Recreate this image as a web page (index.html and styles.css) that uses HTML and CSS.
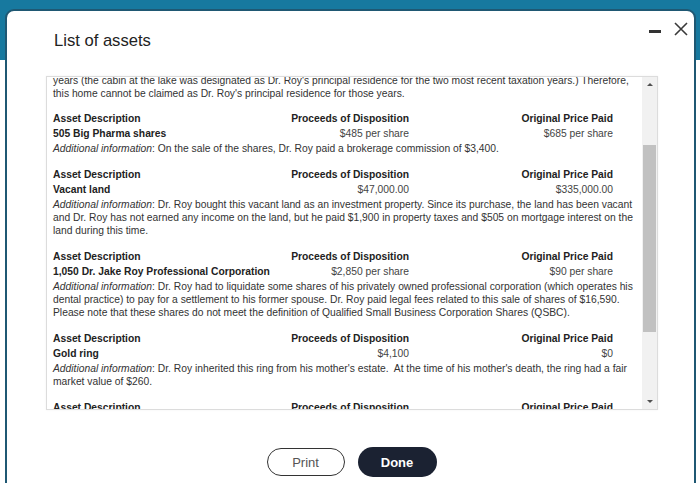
FILE: index.html
```html
<!DOCTYPE html>
<html lang="en">
<head>
<meta charset="utf-8">
<title>List of assets</title>
<link rel="stylesheet" href="styles.css">
</head>
<body>
<div class="backdrop"></div>
<div class="dialog">
  <div class="dialog-header">
    <h1 class="title">List of assets</h1>
    <div class="controls">
      <span class="minimize"></span>
      <svg class="close" width="14" height="14" viewBox="0 0 14 14"><path d="M1 1L13 13M13 1L1 13" stroke="#3a3a3a" stroke-width="1.6" fill="none"/></svg>
    </div>
  </div>
  <div class="scroll-box">
    <div class="scroll-content">
      <p class="intro">years (the cabin at the lake was designated as Dr. Roy's principal residence for the two most recent taxation years.) Therefore, this home cannot be claimed as Dr. Roy's principal residence for those years.</p>

      <div class="asset">
        <div class="row head"><span>Asset Description</span><span class="r">Proceeds of Disposition</span><span class="r">Original Price Paid</span></div>
        <div class="row vals"><span class="name">505 Big Pharma shares</span><span class="r">$485 per share</span><span class="r">$685 per share</span></div>
        <p class="info"><em>Additional information</em>: On the sale of the shares, Dr. Roy paid a brokerage commission of $3,400.</p>
      </div>

      <div class="asset">
        <div class="row head"><span>Asset Description</span><span class="r">Proceeds of Disposition</span><span class="r">Original Price Paid</span></div>
        <div class="row vals"><span class="name">Vacant land</span><span class="r">$47,000.00</span><span class="r">$335,000.00</span></div>
        <p class="info"><em>Additional information</em>: Dr. Roy bought this vacant land as an investment property. Since its purchase, the land has been vacant and Dr. Roy has not earned any income on the land, but he paid $1,900 in property taxes and $505 on mortgage interest on the land during this time.</p>
      </div>

      <div class="asset">
        <div class="row head"><span>Asset Description</span><span class="r">Proceeds of Disposition</span><span class="r">Original Price Paid</span></div>
        <div class="row vals"><span class="name">1,050 Dr. Jake Roy Professional Corporation</span><span class="r">$2,850 per share</span><span class="r">$90 per share</span></div>
        <p class="info"><em>Additional information</em>: Dr. Roy had to liquidate some shares of his privately owned professional corporation (which operates his dental practice) to pay for a settlement to his former spouse. Dr. Roy paid legal fees related to this sale of shares of $16,590. Please note that these shares do not meet the definition of Qualified Small Business Corporation Shares (QSBC).</p>
      </div>

      <div class="asset">
        <div class="row head"><span>Asset Description</span><span class="r">Proceeds of Disposition</span><span class="r">Original Price Paid</span></div>
        <div class="row vals"><span class="name">Gold ring</span><span class="r">$4,100</span><span class="r">$0</span></div>
        <p class="info"><em>Additional information</em>: Dr. Roy inherited this ring from his mother's estate.&nbsp; At the time of his mother's death, the ring had a fair market value of $260.</p>
      </div>

      <div class="asset">
        <div class="row head"><span>Asset Description</span><span class="r">Proceeds of Disposition</span><span class="r">Original Price Paid</span></div>
      </div>
    </div>
    <div class="scrollbar">
      <span class="arrow up"></span>
      <div class="track"><div class="thumb"></div></div>
      <span class="arrow down"></span>
    </div>
  </div>
  <div class="footer">
    <button class="btn btn-print">Print</button>
    <button class="btn btn-done">Done</button>
  </div>
</div>
</body>
</html>
```

FILE: styles.css
```css
html, body {
  margin: 0;
  padding: 0;
  height: 100%;
  overflow: hidden;
}
body {
  background: #ffffff;
  font-family: "Liberation Sans", Arial, sans-serif;
  position: relative;
}
.backdrop {
  position: absolute;
  left: 0;
  top: 0;
  right: 0;
  height: 60px;
  background: #17799f;
}
.dialog {
  position: relative;
  margin: 9px 4px 0 5px;
  height: 500px;
  background: #ffffff;
  border: 2px solid #1f5873;
  border-radius: 9px 9px 0 0;
  display: flex;
  flex-direction: column;
}
.dialog-header {
  display: flex;
  justify-content: space-between;
  align-items: flex-start;
  padding: 11px 6px 0 47px;
}
.title {
  margin: 9px 0 0 0;
  font-size: 16.6px;
  line-height: 20px;
  font-weight: normal;
  color: #222;
}
.controls {
  display: flex;
  align-items: center;
  gap: 13px;
  height: 14px;
}
.minimize {
  display: block;
  width: 12px;
  height: 3px;
  background: #333;
  margin-top: 5px;
}
.close {
  display: block;
}
.scroll-box {
  margin: 25px 36px 0 39px;
  height: 332px;
  border: 1px solid #dcdcdc;
  display: flex;
  overflow: hidden;
  box-shadow: 0 0 2px rgba(0,0,0,0.06);
}
.scroll-content {
  flex: 1;
  overflow: hidden;
  padding: 0 8px 0 6px;
  font-size: 10.3px;
  color: #333;
}
.intro {
  margin: -2px 0 11px 0;
  line-height: 12.5px;
}
.asset {
  margin-bottom: 12px;
}
.row {
  display: grid;
  grid-template-columns: 217px 139px 204px;
}
.row .r {
  text-align: right;
}
.head {
  line-height: 15px;
  font-weight: bold;
  color: #222;
}
.vals {
  line-height: 16px;
  color: #444;
}
.vals .name {
  font-weight: bold;
  color: #222;
  white-space: nowrap;
}
.info {
  margin: 0;
  line-height: 13px;
}
.info em {
  font-style: italic;
}
.scrollbar {
  width: 15px;
  background: #f1f1f1;
  display: flex;
  flex-direction: column;
  align-items: center;
}
.arrow {
  display: block;
  width: 0;
  height: 0;
  border-left: 3px solid transparent;
  border-right: 3px solid transparent;
}
.arrow.up {
  margin: 6px 0 4px;
  border-bottom: 3px solid #505050;
}
.arrow.down {
  margin: 4px 0 6px;
  border-top: 3px solid #505050;
}
.track {
  flex: 1;
  width: 100%;
  display: flex;
  flex-direction: column;
  padding-top: 55px;
  box-sizing: border-box;
}
.thumb {
  height: 187px;
  margin: 0 1px;
  background: #c1c1c1;
}
.footer {
  display: flex;
  justify-content: center;
  align-items: center;
  gap: 13px;
  margin-top: 37px;
  padding-left: 2px;
}
.btn {
  font-family: "Liberation Sans", Arial, sans-serif;
  font-size: 13px;
  border-radius: 16px;
  cursor: pointer;
}
.btn-print {
  width: 78px;
  height: 28px;
  background: #fff;
  border: 1.5px solid #333;
  color: #555;
}
.btn-done {
  width: 79px;
  height: 30px;
  background: #1b2232;
  border: none;
  color: #fff;
  font-weight: 600;
}
```
